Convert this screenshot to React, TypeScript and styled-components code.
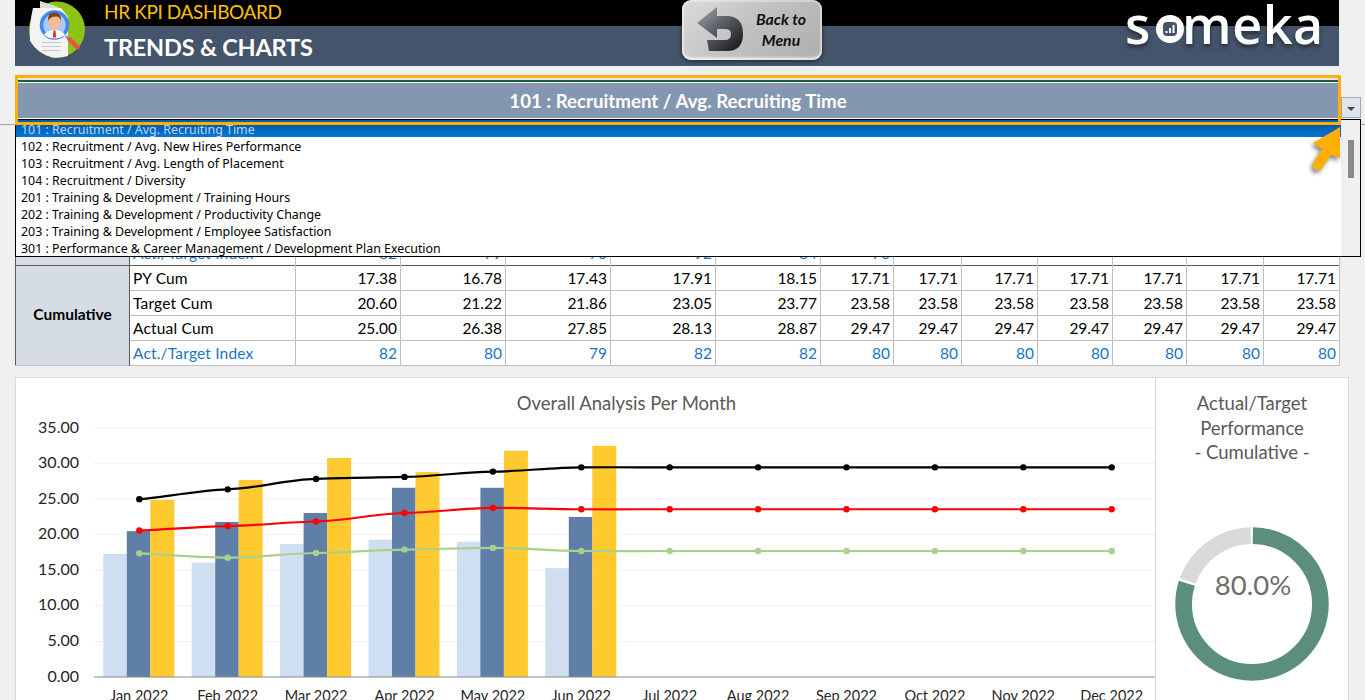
import React from "react";
import styled, { createGlobalStyle } from "styled-components";

const Global = createGlobalStyle`
  html, body { margin: 0; padding: 0; background: #f0f0f0; overflow: hidden; height: 700px; }
  * { box-sizing: border-box; }
  body { font-family: "Lato", "Open Sans", sans-serif; color: #000; }
`;

const Page = styled.div`
  width: 1365px;
  height: 700px;
  overflow: hidden;
`;

const Header = styled.header`
  margin-left: 15px;
  width: 1324px;
  height: 66px;
  background: linear-gradient(#000 0 26px, #44546a 26px);
  display: flex;
`;

const LogoSlot = styled.div`
  width: 89px;
  flex: none;
  svg { display: block; }
`;

const Titles = styled.div`
  width: 578px;
  flex: none;
`;

const Kicker = styled.div`
  color: #ffc000;
  font-size: 19px;
  line-height: 23px;
  letter-spacing: -0.37px;
`;

const Heading = styled.h1`
  margin: 11px 0 0;
  color: #fff;
  font-size: 23.5px;
  line-height: 26px;
  font-weight: 700;
  letter-spacing: -0.2px;
`;

const BackButton = styled.button`
  width: 140px;
  height: 60px;
  flex: none;
  border: none;
  padding: 0 0 0 14px;
  border-radius: 9px;
  background: linear-gradient(135deg, #dcdcdc 0%, #c2c2c2 45%, #aeaeae 100%);
  box-shadow: inset 0 0 0 2px rgba(255,255,255,.35), inset 0 -3px 3px rgba(255,255,255,.5), 0 1px 4px rgba(0,0,0,.6);
  display: flex;
  align-items: center;
  gap: 2px;
`;

const BackLabel = styled.span`
  width: 66px;
  font-family: "Lato", sans-serif;
  font-style: italic;
  font-weight: 700;
  font-size: 15.8px;
  line-height: 21px;
  color: #111;
  text-align: center;
  margin-top: -3px;
`;

const Wordmark = styled.div`
  margin-left: 303px;
  height: 66px;
  display: flex;
  align-items: flex-start;
  color: #fff;
  font-family: "Open Sans", sans-serif;
  font-weight: 600;
  font-size: 52px;
  line-height: 48px;
  letter-spacing: 0.6px;
  text-shadow: 0 3px 4px rgba(0,0,0,.45);
  svg { margin: 15px -2px 0 5px; flex: none; }
`;

const SelectorArea = styled.div`
  position: relative;
  margin-top: 9px;
  padding-left: 15px;
  height: 50px;
  &::before {
    content: "";
    position: absolute;
    left: 0;
    right: 0;
    top: 49px;
    height: 1px;
    background: #a6a6a6;
  }
`;

const Frame = styled.div`
  position: relative;
  z-index: 2;
  width: 1326px;
  height: 50px;
  border: 3px solid #fdaf08;
  background: linear-gradient(#e6e6e6 0 2px, #005fab 2px);
`;

const Bar = styled.div`
  margin-top: 2px;
  height: 40px;
  background: #8497b0;
  border-top: 2px solid #1d5c3b;
  border-bottom: 1px solid #000;
  box-shadow: inset 0 1px 0 #fff, inset 0 -1px 0 #fff;
  display: flex;
  align-items: center;
  justify-content: center;
  color: #fff;
  font-size: 18.7px;
  font-weight: 700;
`;

const DropButton = styled.div`
  position: absolute;
  z-index: 1;
  left: 1341px;
  top: 22px;
  width: 20px;
  height: 21px;
  background: #dfe5ec;
  border: 1px solid #a6a6a6;
  display: flex;
  align-items: center;
  justify-content: center;
  &::after {
    content: "";
    border-left: 4px solid transparent;
    border-right: 4px solid transparent;
    border-top: 4px solid #444;
    margin-top: 2px;
  }
`;

const List = styled.div`
  position: absolute;
  z-index: 1;
  left: 15px;
  top: 44px;
  width: 1346px;
  height: 138px;
  border: 1px solid #000;
  background: #fff;
  display: flex;
`;

const Options = styled.ul`
  list-style: none;
  margin: 0;
  padding: 0;
  flex: 1;
`;

const Option = styled.li<{ $selected?: boolean }>`
  height: 17px;
  padding-left: 5px;
  font-family: "Noto Sans", "Open Sans", sans-serif;
  font-size: 12.4px;
  line-height: 19px;
  white-space: nowrap;
  color: ${(p) => (p.$selected ? "#c3d3e6" : "#000")};
  background: ${(p) => (p.$selected ? "linear-gradient(#00509c, #0078d7)" : "transparent")};
`;

const Track = styled.div`
  width: 19px;
  flex: none;
  background: #f0f0f0;
  padding: 20px 0 0 7px;
`;

const Thumb = styled.div`
  width: 6px;
  height: 38px;
  background: #8a8a8a;
`;

const PointerIcon = styled.svg`
  position: absolute;
  z-index: 3;
  left: 1305px;
  top: 47px;
  filter: drop-shadow(-2px 3px 2px rgba(0, 0, 0, 0.45));
`;

const Table = styled.table`
  margin: 115px 0 0 15px;
  width: 1324px;
  table-layout: fixed;
  border-collapse: collapse;
  border: 1px solid #595959;
  background: #fff;
  font-size: 15.5px;
`;

const Row = styled.tr<{ $sectionEnd?: boolean }>`
  height: 25px;
  border-bottom: 1px solid ${(p) => (p.$sectionEnd ? "#595959" : "#bfbfbf")};
`;

const SectionCell = styled.th`
  background: #d6dce4;
  border-right: 1px solid #595959;
  font-size: 15.5px;
  font-weight: 700;
  padding: 0 0 4px;
`;

const LabelCell = styled.td<{ $accent?: boolean }>`
  padding: 0 3px;
  border-right: 1px solid #bfbfbf;
  white-space: nowrap;
  letter-spacing: 0.18px;
  color: ${(p) => (p.$accent ? "#1a75c4" : "#000")};
`;

const ValueCell = styled(LabelCell)`
  text-align: right;
  letter-spacing: 0;
`;

const ChartPanel = styled.section`
  margin: 11px 0 0 15px;
  width: 1334px;
  height: 340px;
  background: #fff;
  border: 1px solid #d9d9d9;
  display: flex;
`;

const MainChart = styled.div`
  width: 1140px;
  flex: none;
  border-right: 1px solid #d9d9d9;
  svg { display: block; }
`;

const ChartTitle = styled.h2`
  margin: 0;
  padding-top: 13px;
  height: 38px;
  font-size: 18.5px;
  line-height: 24px;
  font-weight: 400;
  color: #595959;
  text-align: center;
  padding-left: 82px;
`;

const SidePanel = styled.div`
  flex: 1;
  text-align: center;
`;

const SideTitle = styled(ChartTitle)`
  height: auto;
  padding-left: 0;
  line-height: 24.5px;
`;

const DonutSvg = styled.svg`
  display: block;
  margin: 59px auto 0;
`;

const columns = [114, 166, 105, 105, 105, 105, 105, 73, 68, 76, 75, 74, 77, 76];

const rows = [
  { label: "PY Cum", values: ["17.38", "16.78", "17.43", "17.91", "18.15", "17.71", "17.71", "17.71", "17.71", "17.71", "17.71", "17.71"] },
  { label: "Target Cum", values: ["20.60", "21.22", "21.86", "23.05", "23.77", "23.58", "23.58", "23.58", "23.58", "23.58", "23.58", "23.58"] },
  { label: "Actual Cum", values: ["25.00", "26.38", "27.85", "28.13", "28.87", "29.47", "29.47", "29.47", "29.47", "29.47", "29.47", "29.47"] },
  { label: "Act./Target Index", accent: true, values: ["82", "80", "79", "82", "82", "80", "80", "80", "80", "80", "80", "80"] },
];

const partialRow = ["82", "79", "76", "92", "84", "76", "", "", "", "", "", ""];

const options = [
  "101 : Recruitment / Avg. Recruiting Time",
  "102 : Recruitment / Avg. New Hires Performance",
  "103 : Recruitment / Avg. Length of Placement",
  "104 : Recruitment / Diversity",
  "201 : Training & Development / Training Hours",
  "202 : Training & Development / Productivity Change",
  "203 : Training & Development / Employee Satisfaction",
  "301 : Performance & Career Management / Development Plan Execution",
];

const months = ["Jan 2022", "Feb 2022", "Mar 2022", "Apr 2022", "May 2022", "Jun 2022", "Jul 2022", "Aug 2022", "Sep 2022", "Oct 2022", "Nov 2022", "Dec 2022"];
const xAt = (i: number) => 139.3 + 88.4 * i;
const yAt = (v: number) => 676 - v * 7.114;
const lightBars = [17.3, 16.07, 18.7, 19.3, 19.0, 15.3];
const darkBars = [20.5, 21.8, 23.05, 26.6, 26.6, 22.5];
const goldBars = [24.9, 27.7, 30.8, 28.8, 31.8, 32.5];
const series = [
  { color: "#a9d18e", values: rows[0].values.map(Number) },
  { color: "#ff0000", values: rows[1].values.map(Number) },
  { color: "#000000", values: rows[2].values.map(Number) },
];

function smoothPath(values: number[]) {
  const pts = values.map((v, i) => [xAt(i), yAt(v)]);
  let d = `M${pts[0][0]} ${pts[0][1]}`;
  for (let i = 0; i < pts.length - 1; i++) {
    const p0 = pts[Math.max(i - 1, 0)];
    const p1 = pts[i];
    const p2 = pts[i + 1];
    const p3 = pts[Math.min(i + 2, pts.length - 1)];
    const c1 = [p1[0] + (p2[0] - p0[0]) / 6, p1[1] + (p2[1] - p0[1]) / 24];
    const c2 = [p2[0] - (p3[0] - p1[0]) / 6, p2[1] - (p3[1] - p1[1]) / 24];
    d += ` C${c1[0]} ${c1[1]} ${c2[0]} ${c2[1]} ${p2[0]} ${p2[1]}`;
  }
  return d;
}

const Logo = () => (
  <svg width="89" height="62" viewBox="15 0 89 62">
    <circle cx="57" cy="29.5" r="28" fill="#8cc414" />
    <polygon points="40,1 58,7 67,30 40,22" fill="#dcdcdc" />
    <path d="M33 8 L61 8 L68 17 L68 56 Q60 58.5 52 57.5 Q37 53 30 41 Q29 24 33 8 Z" fill="#f3f3f3" />
    <path d="M42 42.5H61M42 46.5H61M42 50.5H61" stroke="#c8c8c8" strokeWidth="1.2" />
    <circle cx="54.5" cy="25" r="13" fill="#a9c9f7" stroke="#4285f4" strokeWidth="3.5" />
    <path d="M44 35 Q46 30.5 54.5 30 Q63 30.5 65 35 Q60 38.5 54.5 38.5 Q49 38.5 44 35 Z" fill="#fff" />
    <path d="M53.5 30.5h2l.7 7h-3.4z" fill="#d9342b" />
    <ellipse cx="54.5" cy="22" rx="6" ry="7.5" fill="#f8bb8e" />
    <path d="M48 21 Q47 12.5 54.5 12.5 Q62 12.5 61 21 Q60 16.5 56 16.5 Q50 16.5 48 21 Z" fill="#7c431f" />
    <path d="M66 36 L69 39" stroke="#9a9a9a" strokeWidth="3" />
    <path d="M69.5 39.5 L77.5 47" stroke="#e8524a" strokeWidth="4.5" strokeLinecap="round" />
  </svg>
);

const BackIcon = () => (
  <svg width="50" height="50" viewBox="0 0 50 50">
    <defs>
      <linearGradient id="backArrow" x1="0" y1="0" x2="0.9" y2="1">
        <stop offset="0" stopColor="#a3a9b0" />
        <stop offset="0.45" stopColor="#5d636b" />
        <stop offset="1" stopColor="#17181a" />
      </linearGradient>
    </defs>
    <path
      d="M1 18 L21 2 L21 11 L32 11 Q47 12 47 29 Q47 46 31 46 L13 46 L11 35 L29 35 Q35 35 35 29 Q35 24 29 24 L21 24 L21 33 Z"
      fill="url(#backArrow)"
    />
  </svg>
);

const SomekaO = () => (
  <svg width="28" height="28" viewBox="0 0 28 28">
    <circle cx="14" cy="14" r="14" fill="#fff" />
    <rect x="7" y="7" width="14" height="14" rx="4" fill="#44546a" />
    <path d="M10.5 18v-2M14 18v-5M17.5 18v-8" stroke="#fff" strokeWidth="2" />
  </svg>
);

const Chart = () => (
  <svg width="1139" height="300" viewBox="16 415 1139 300">
    {[0, 5, 10, 15, 20, 25, 30, 35].map((v) => (
      <g key={v}>
        {v > 0 && <line x1="94" x2="1155" y1={yAt(v)} y2={yAt(v)} stroke="#f0f0f0" strokeWidth="1" />}
        <text x="79" y={yAt(v) + 4.5} textAnchor="end" fontSize="16" fill="#262626" fontFamily="Lato, sans-serif">
          {v.toFixed(2)}
        </text>
      </g>
    ))}
    {lightBars.map((v, i) => (
      <rect key={i} x={xAt(i) - 36} y={yAt(v)} width="24" height={676 - yAt(v)} fill="#cfdff1" />
    ))}
    {darkBars.map((v, i) => (
      <rect key={i} x={xAt(i) - 12.5} y={yAt(v)} width="23.5" height={676 - yAt(v)} fill="#5f7fa8" />
    ))}
    {goldBars.map((v, i) => (
      <rect key={i} x={xAt(i) + 11} y={yAt(v)} width="24" height={676 - yAt(v)} fill="#ffca2f" />
    ))}
    <line x1="94" x2="1155" y1="676" y2="676" stroke="#898989" strokeWidth="1" />
    {series.map((s) => (
      <g key={s.color}>
        <path d={smoothPath(s.values)} fill="none" stroke={s.color} strokeWidth="2.2" />
        {s.values.map((v, i) => (
          <circle key={i} cx={xAt(i)} cy={yAt(v)} r="3.2" fill={s.color} />
        ))}
      </g>
    ))}
    {months.map((m, i) => (
      <text key={m} x={xAt(i)} y="700" textAnchor="middle" fontSize="14.5" fill="#262626" fontFamily="Lato, sans-serif">
        {m}
      </text>
    ))}
  </svg>
);

const Donut = () => (
  <DonutSvg width="160" height="160" viewBox="0 0 160 160">
    <g transform="rotate(-90 80 80)" fill="none" strokeWidth="16.7">
      <circle cx="80" cy="80" r="68.4" pathLength={100} stroke="#5b8e7d" strokeDasharray="79.7 20.3" strokeDashoffset="-0.2" />
      <circle cx="80" cy="80" r="68.4" pathLength={100} stroke="#d9d9d9" strokeDasharray="19.2 80.8" strokeDashoffset="-80.5" />
    </g>
    <text x="81" y="71" textAnchor="middle" fontSize="27.5" fill="#6e6e6e" fontFamily="Lato, sans-serif">
      80.0%
    </text>
  </DonutSvg>
);

export default function App() {
  return (
    <Page>
      <Global />
      <Header>
        <LogoSlot>
          <Logo />
        </LogoSlot>
        <Titles>
          <Kicker>HR KPI DASHBOARD</Kicker>
          <Heading>TRENDS &amp; CHARTS</Heading>
        </Titles>
        <BackButton type="button">
          <BackIcon />
          <BackLabel>
            Back to
            <br />
            Menu
          </BackLabel>
        </BackButton>
        <Wordmark>
          s
          <SomekaO />
          meka
        </Wordmark>
      </Header>

      <SelectorArea>
        <Frame>
          <Bar>101 : Recruitment / Avg. Recruiting Time</Bar>
        </Frame>
        <DropButton />
        <List>
          <Options>
            {options.map((o, i) => (
              <Option key={o} $selected={i === 0}>
                {o}
              </Option>
            ))}
          </Options>
          <Track>
            <Thumb />
          </Track>
        </List>
        <PointerIcon width="45" height="55" viewBox="0 0 45 55">
          <path d="M35 5 L8 21 L17 27 L8 41 Q7 46 11 48 Q15 49 17 46 L26 33 L35 36 Z" fill="#fdaf08" />
        </PointerIcon>
      </SelectorArea>

      <Table>
        <colgroup>
          {columns.map((w, i) => (
            <col key={i} width={w} />
          ))}
        </colgroup>
        <tbody>
          <Row $sectionEnd>
            <SectionCell />
            <LabelCell $accent>Act./Target Index</LabelCell>
            {partialRow.map((v, i) => (
              <ValueCell key={i} $accent>
                {v}
              </ValueCell>
            ))}
          </Row>
          {rows.map((r, ri) => (
            <Row key={r.label}>
              {ri === 0 && <SectionCell rowSpan={4}>Cumulative</SectionCell>}
              <LabelCell $accent={r.accent}>{r.label}</LabelCell>
              {r.values.map((v, i) => (
                <ValueCell key={i} $accent={r.accent}>
                  {v}
                </ValueCell>
              ))}
            </Row>
          ))}
        </tbody>
      </Table>

      <ChartPanel>
        <MainChart>
          <ChartTitle>Overall Analysis Per Month</ChartTitle>
          <Chart />
        </MainChart>
        <SidePanel>
          <SideTitle>
            Actual/Target
            <br />
            Performance
            <br />- Cumulative -
          </SideTitle>
          <Donut />
        </SidePanel>
      </ChartPanel>
    </Page>
  );
}
